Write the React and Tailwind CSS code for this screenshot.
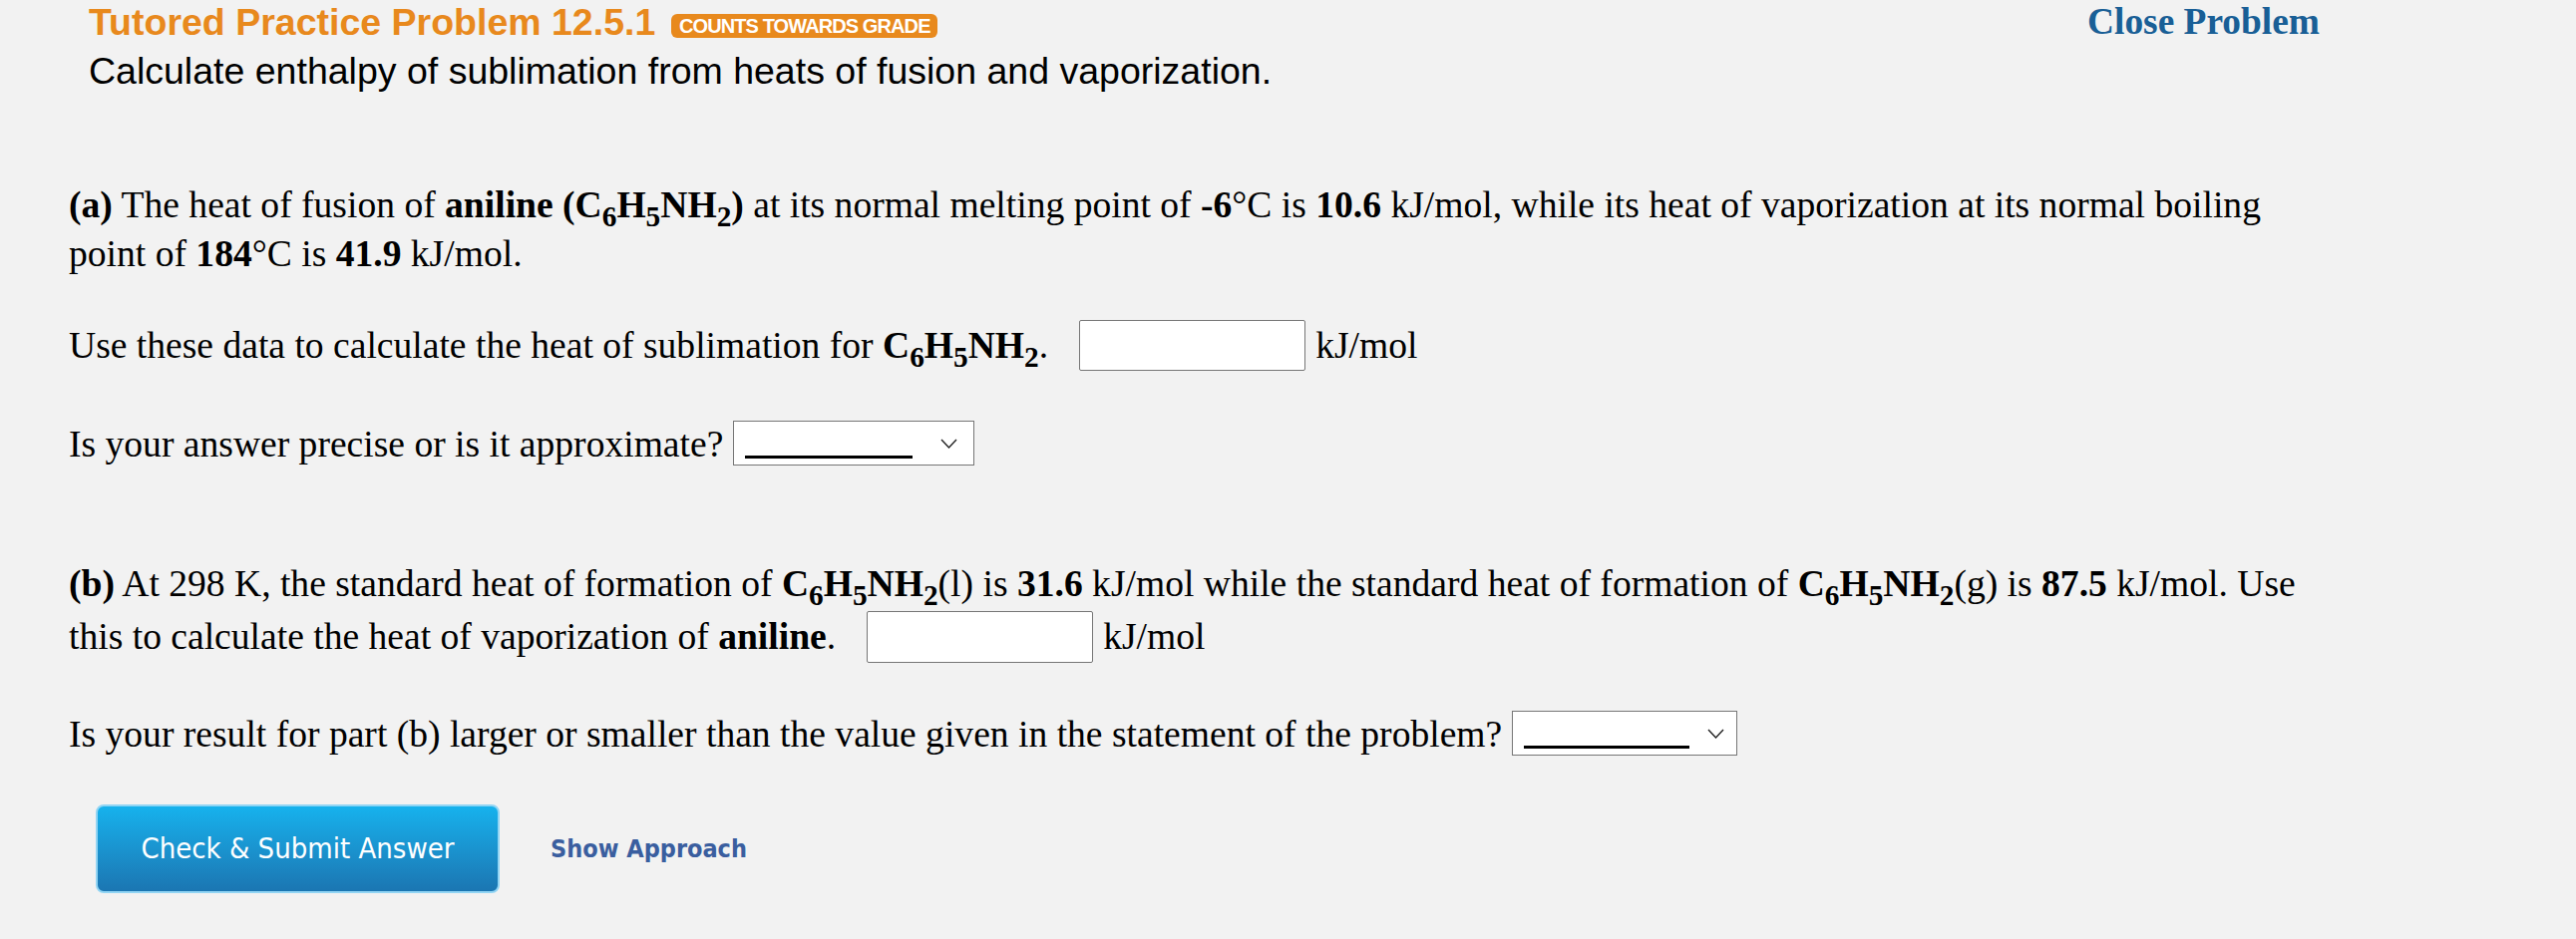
import React from "react";

const serif = "font-['Liberation_Serif','Times_New_Roman',serif]";
const sans = "font-['Liberation_Sans',Arial,sans-serif]";
const tahoma = "font-['DejaVu_Sans_Condensed','DejaVu_Sans',sans-serif]";

// subscript digit, sits a bit lower than the default <sub>
const Sub = ({ children }) => (
  <span className="relative top-[0.3em] text-[0.78em] leading-[0]">{children}</span>
);

// C6H5NH2 with subscripts
const Aniline = () => (
  <b>
    C<Sub>6</Sub>H<Sub>5</Sub>NH<Sub>2</Sub>
  </b>
);

const AnswerBox = ({ className = "" }) => (
  <span
    className={`inline-block w-[227px] rounded-[2px] border border-[#767676] bg-white ${className}`}
  />
);

const BlankSelect = ({ width, line, padRight }) => (
  <span
    className={`ml-[10px] inline-block h-[45px] overflow-hidden border border-[#767676] bg-white align-[-9px] ${width}`}
  >
    <span className={`flex h-full justify-between pl-[11px] ${padRight}`}>
      <span className={`mb-[6px] h-[3px] self-end bg-black ${line}`} />
      <svg width="17" height="10" viewBox="0 0 17 10" className="mt-[1px] self-center">
        <polyline points="1,1 8.5,9 16,1" fill="none" stroke="#222" strokeWidth="1.4" />
      </svg>
    </span>
  </span>
);

export default function App() {
  return (
    <div className="min-h-screen w-full bg-[#f2f2f2] text-black">
      <div className={`w-[2330px] pl-[69px] ${serif} text-[37.6px] leading-[49px]`}>
        {/* header */}
        <div className="flex justify-between pl-[20px] pr-[4px]">
          <div>
            <div className="flex items-start">
              <h1 className={`${sans} text-[37.5px] font-bold leading-[44px] text-[#e8891d]`}>
                Tutored Practice Problem 12.5.1
              </h1>
              <span
                className={`${sans} ml-[16px] mt-[14px] flex h-[24px] w-[267px] items-center justify-center rounded-[6px] bg-[#e8891d] text-[20px] font-bold leading-none tracking-[-0.9px] text-white`}
              >
                COUNTS TOWARDS GRADE
              </span>
            </div>
            <p className={`${sans} mt-[5px] text-[37.5px] leading-[44px]`}>
              Calculate enthalpy of sublimation from heats of fusion and vaporization.
            </p>
          </div>
          <a className="text-[37.4px] font-bold leading-[44px] text-[#195f96]">Close Problem</a>
        </div>

        {/* part a */}
        <p className="mt-[88px]">
          <b>(a)</b> The heat of fusion of <b>aniline (</b>
          <Aniline />
          <b>)</b> at its normal melting point of <b>-6</b>°C is <b>10.6</b> kJ/mol, while its
          heat of vaporization at its normal boiling point of <b>184</b>°C is <b>41.9</b> kJ/mol.
        </p>

        <p className="mt-[42px]">
          Use these data to calculate the heat of sublimation for <Aniline />.
          <AnswerBox className="ml-[31px] h-[51px] align-[-13px]" />
          <span className="ml-[10px]">kJ/mol</span>
        </p>

        <p className="mt-[49px]">
          Is your answer precise or is it approximate?
          <BlankSelect width="w-[242px]" line="w-[168px]" padRight="pr-[16px]" />
        </p>

        {/* part b */}
        <p className="mt-[91px]">
          <b>(b)</b> At 298 K, the standard heat of formation of <Aniline />
          (l) is <b>31.6</b> kJ/mol while the standard heat of formation of <Aniline />
          (g) is <b>87.5</b> kJ/mol. Use this to calculate the heat of vaporization of{" "}
          <b>aniline</b>.
          <AnswerBox className="ml-[31px] mt-[3px] h-[52px] align-[-14px]" />
          <span className="ml-[10px]">kJ/mol</span>
        </p>

        <p className="mt-[47px]">
          Is your result for part (b) larger or smaller than the value given in the statement of
          the problem?
          <BlankSelect width="w-[226px]" line="w-[166px]" padRight="pr-[12px]" />
        </p>

        {/* actions */}
        <div className={`${tahoma} mt-[46px] flex items-center pl-[27px]`}>
          <button className="flex h-[89px] w-[405px] items-center justify-center rounded-[8px] border-2 border-[#92d5f4] bg-linear-to-b from-[#16b2ed] to-[#1b76b2] text-[29px] text-white">
            Check &amp; Submit Answer
          </button>
          <a className="ml-[51px] text-[25px] font-bold text-[#3a5e9f]">Show Approach</a>
        </div>
      </div>
    </div>
  );
}
